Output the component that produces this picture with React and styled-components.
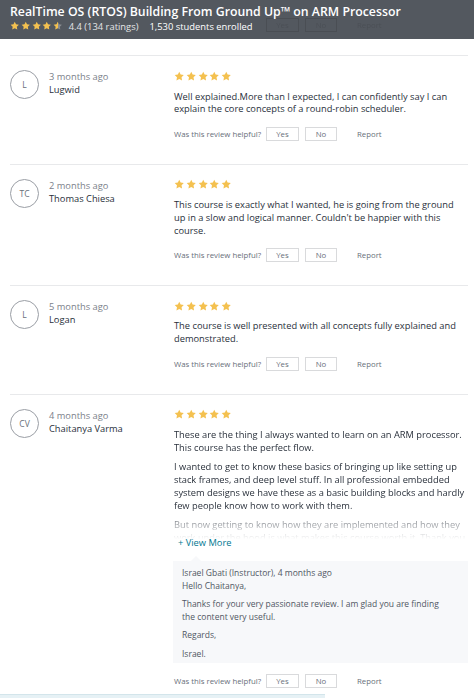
import React from "react";
import styled, { createGlobalStyle } from "styled-components";

const reviews = [
  {
    id: 1,
    initials: "L",
    date: "3 months ago",
    name: "Lugwid",
    paragraphs: [
      "Well explained.More than I expected, I can confidently say I can explain the core concepts of a round-robin scheduler.",
    ],
  },
  {
    id: 2,
    initials: "TC",
    date: "2 months ago",
    name: "Thomas Chiesa",
    paragraphs: [
      "This course is exactly what I wanted, he is going from the ground up in a slow and logical manner. Couldn't be happier with this course.",
    ],
  },
  {
    id: 3,
    initials: "L",
    date: "5 months ago",
    name: "Logan",
    paragraphs: [
      "The course is well presented with all concepts fully explained and demonstrated.",
    ],
  },
  {
    id: 4,
    initials: "CV",
    date: "4 months ago",
    name: "Chaitanya Varma",
    collapsed: true,
    paragraphs: [
      "These are the thing I always wanted to learn on an ARM processor. This course has the perfect flow.",
      "I wanted to get to know these basics of bringing up like setting up stack frames, and deep level stuff. In all professional embedded system designs we have these as a basic building blocks and hardly few people know how to work with them.",
      "But now getting to know how they are implemented and how they work under the hood is what makes this course worth it. Thank you for such a great course, I will recommend it to all my colleagues.",
    ],
    response: {
      author: "Israel Gbati (Instructor), 4 months ago",
      paragraphs: [
        "Hello Chaitanya,",
        "Thanks for your very passionate review. I am glad you are finding the content very useful.",
        "Regards,",
        "Israel.",
      ],
    },
  },
];

const STAR_PATH =
  "M12 1.6l3.2 6.6 7.2 1-5.2 5.1 1.2 7.2L12 18.1l-6.4 3.4 1.2-7.2L1.6 9.2l7.2-1z";

function Star({ size, fill = 1, uid }) {
  const gid = `star-${uid}`;
  return (
    <svg width={size} height={size} viewBox="0 0 24 24">
      {fill < 1 && (
        <defs>
          <linearGradient id={gid}>
            <stop offset={fill} stopColor="#f4c150" />
            <stop offset={fill} stopColor="#8a8d92" />
          </linearGradient>
        </defs>
      )}
      <path d={STAR_PATH} fill={fill < 1 ? `url(#${gid})` : "#f4c150"} />
    </svg>
  );
}

function StarRow({ rating, size, uid }) {
  return (
    <Stars>
      {[0, 1, 2, 3, 4].map((i) => (
        <Star
          key={i}
          size={size}
          uid={`${uid}-${i}`}
          fill={Math.max(0, Math.min(1, rating - i))}
        />
      ))}
    </Stars>
  );
}

function Helpful() {
  return (
    <HelpfulRow>
      <HelpfulLabel>Was this review helpful?</HelpfulLabel>
      <VoteButton $w={33}>Yes</VoteButton>
      <VoteButton $w={32}>No</VoteButton>
      <ReportLink>Report</ReportLink>
    </HelpfulRow>
  );
}

function Review({ review }) {
  const body = review.paragraphs.map((p, i) => <Text key={i}>{p}</Text>);
  return (
    <ReviewItem>
      <Author>
        <Avatar>{review.initials}</Avatar>
        <div>
          <DateLine>{review.date}</DateLine>
          <NameLine>{review.name}</NameLine>
        </div>
      </Author>
      <Content>
        <StarRow rating={5} size={10.5} uid={`r${review.id}`} />
        {review.collapsed ? (
          <Collapsible>
            <Clamp>{body}</Clamp>
            <ViewMore>+ View More</ViewMore>
          </Collapsible>
        ) : (
          body
        )}
        {review.response && (
          <Response>
            <ResponseText>{review.response.author}</ResponseText>
            {review.response.paragraphs.map((p, i) => (
              <ResponseText key={i} $gap={i > 0}>
                {p}
              </ResponseText>
            ))}
          </Response>
        )}
        <Helpful />
      </Content>
    </ReviewItem>
  );
}

export default function App() {
  return (
    <>
      <GlobalStyle />
      <Header>
        <GhostRow aria-hidden="true">
          <VoteButton $w={33}>Yes</VoteButton>
          <VoteButton $w={32}>No</VoteButton>
          <ReportLink>Report</ReportLink>
        </GhostRow>
        <CourseTitle>
          RealTime OS (RTOS) Building From Ground Up™ on ARM Processor
        </CourseTitle>
        <MetaRow>
          <StarRow rating={4.5} size={9.5} uid="hdr" />
          <RatingText>4.4 (134 ratings)</RatingText>
          <Enrolled>1,530 students enrolled</Enrolled>
        </MetaRow>
      </Header>
      <ReviewList>
        {reviews.map((r) => (
          <Review key={r.id} review={r} />
        ))}
      </ReviewList>
      <BottomBar />
    </>
  );
}

const GlobalStyle = createGlobalStyle`
  * { box-sizing: border-box; }
  body {
    margin: 0;
    background: #fff;
    font-family: "Open Sans", "Liberation Sans", sans-serif;
    color: #29303b;
  }
  p { margin: 0; }
`;

const Header = styled.header`
  position: relative;
  height: 39px;
  padding: 5px 10px 0;
  background: #53585f;
  overflow: hidden;
`;

const CourseTitle = styled.h1`
  position: relative;
  margin: 0;
  font-size: 12.3px;
  line-height: 14px;
  font-weight: 600;
  color: #fff;
  white-space: nowrap;
`;

const MetaRow = styled.div`
  position: relative;
  display: flex;
  align-items: center;
  height: 12px;
  margin-top: 1px;
  font-size: 9.4px;
  color: #e4e5e7;
`;

const Stars = styled.div`
  display: flex;
  align-items: center;
  gap: 1.3px;
  height: 12px;
`;

const RatingText = styled.span`
  margin-left: 6px;
`;

const Enrolled = styled.span`
  margin-left: 11px;
  color: #fff;
`;

const ReviewList = styled.div`
  margin: 16px 6px 0 10px;
`;

const ReviewItem = styled.div`
  display: grid;
  grid-template-columns: 164px 1fr;
  padding: 14px 0 23px;
  border-top: 1px solid #e8e9eb;
`;

const Author = styled.div`
  display: flex;
  gap: 10px;
`;

const Avatar = styled.div`
  flex: none;
  display: flex;
  align-items: center;
  justify-content: center;
  width: 29px;
  height: 29px;
  border: 1px solid #9a9ea5;
  border-radius: 50%;
  font-size: 8.5px;
  color: #686f7a;
`;

const DateLine = styled.div`
  font-size: 9.3px;
  line-height: 13px;
  color: #7b818a;
`;

const NameLine = styled.div`
  font-size: 9.3px;
  line-height: 13px;
  color: #29303b;
`;

const Content = styled.div`
  display: flex;
  flex-direction: column;

  & > ${Stars} {
    margin-bottom: 8.5px;
  }
`;

const Text = styled.p`
  padding-right: 2.2px;
  font-size: 9.3px;
  line-height: 12.8px;
  color: #29303b;

  & + & {
    margin-top: 6.5px;
  }
`;

const Collapsible = styled.div`
  position: relative;
`;

const Clamp = styled.div`
  max-height: 120px;
  overflow: hidden;
  -webkit-mask-image: linear-gradient(to bottom, #000 64%, transparent 92%);
  mask-image: linear-gradient(to bottom, #000 64%, transparent 92%);
`;

const ViewMore = styled.button`
  position: absolute;
  left: 0;
  bottom: 0;
  padding: 0 0 0 4px;
  border: 0;
  background: none;
  font-family: inherit;
  font-size: 9.3px;
  line-height: 13px;
  color: #007791;
`;

const Response = styled.div`
  position: relative;
  margin: 11.5px 0 0 -1px;
  padding: 6.5px 20px 3px 9px;
  background: #f7f8fa;

  &::before {
    content: "";
    position: absolute;
    left: 18px;
    top: -5px;
    border: 5px solid transparent;
    border-top: 0;
    border-bottom-color: #f7f8fa;
  }
`;

const ResponseText = styled.p`
  font-size: 8.5px;
  line-height: 12.8px;
  color: #505763;
  margin-top: ${(p) => (p.$gap ? "5.5px" : "0")};
`;

const HelpfulRow = styled.div`
  display: flex;
  align-items: center;
  height: 14px;
  margin-top: 10.5px;
  white-space: nowrap;
`;

const HelpfulLabel = styled.span`
  width: 92px;
  font-size: 7.8px;
  color: #686f7a;
`;

const VoteButton = styled.button`
  width: ${(p) => p.$w}px;
  height: 14px;
  margin-right: 6px;
  padding: 0;
  border: 1px solid #d9dadc;
  background: #fff;
  font-family: inherit;
  font-size: 7.8px;
  color: #686f7a;
`;

const ReportLink = styled.span`
  margin-left: 14px;
  font-size: 7.8px;
  color: #686f7a;
`;

const GhostRow = styled.div`
  position: absolute;
  left: 266px;
  top: 18px;
  display: flex;
  align-items: center;
  opacity: 0.1;

  ${VoteButton} {
    background: transparent;
    border-color: #000;
    color: #000;
  }
  ${ReportLink} {
    color: #000;
  }
`;

const BottomBar = styled.div`
  position: fixed;
  left: 0;
  bottom: 0;
  width: 325px;
  height: 4px;
  background: #e6f1f5;
  border-top: 1px solid #d3e5eb;
`;
